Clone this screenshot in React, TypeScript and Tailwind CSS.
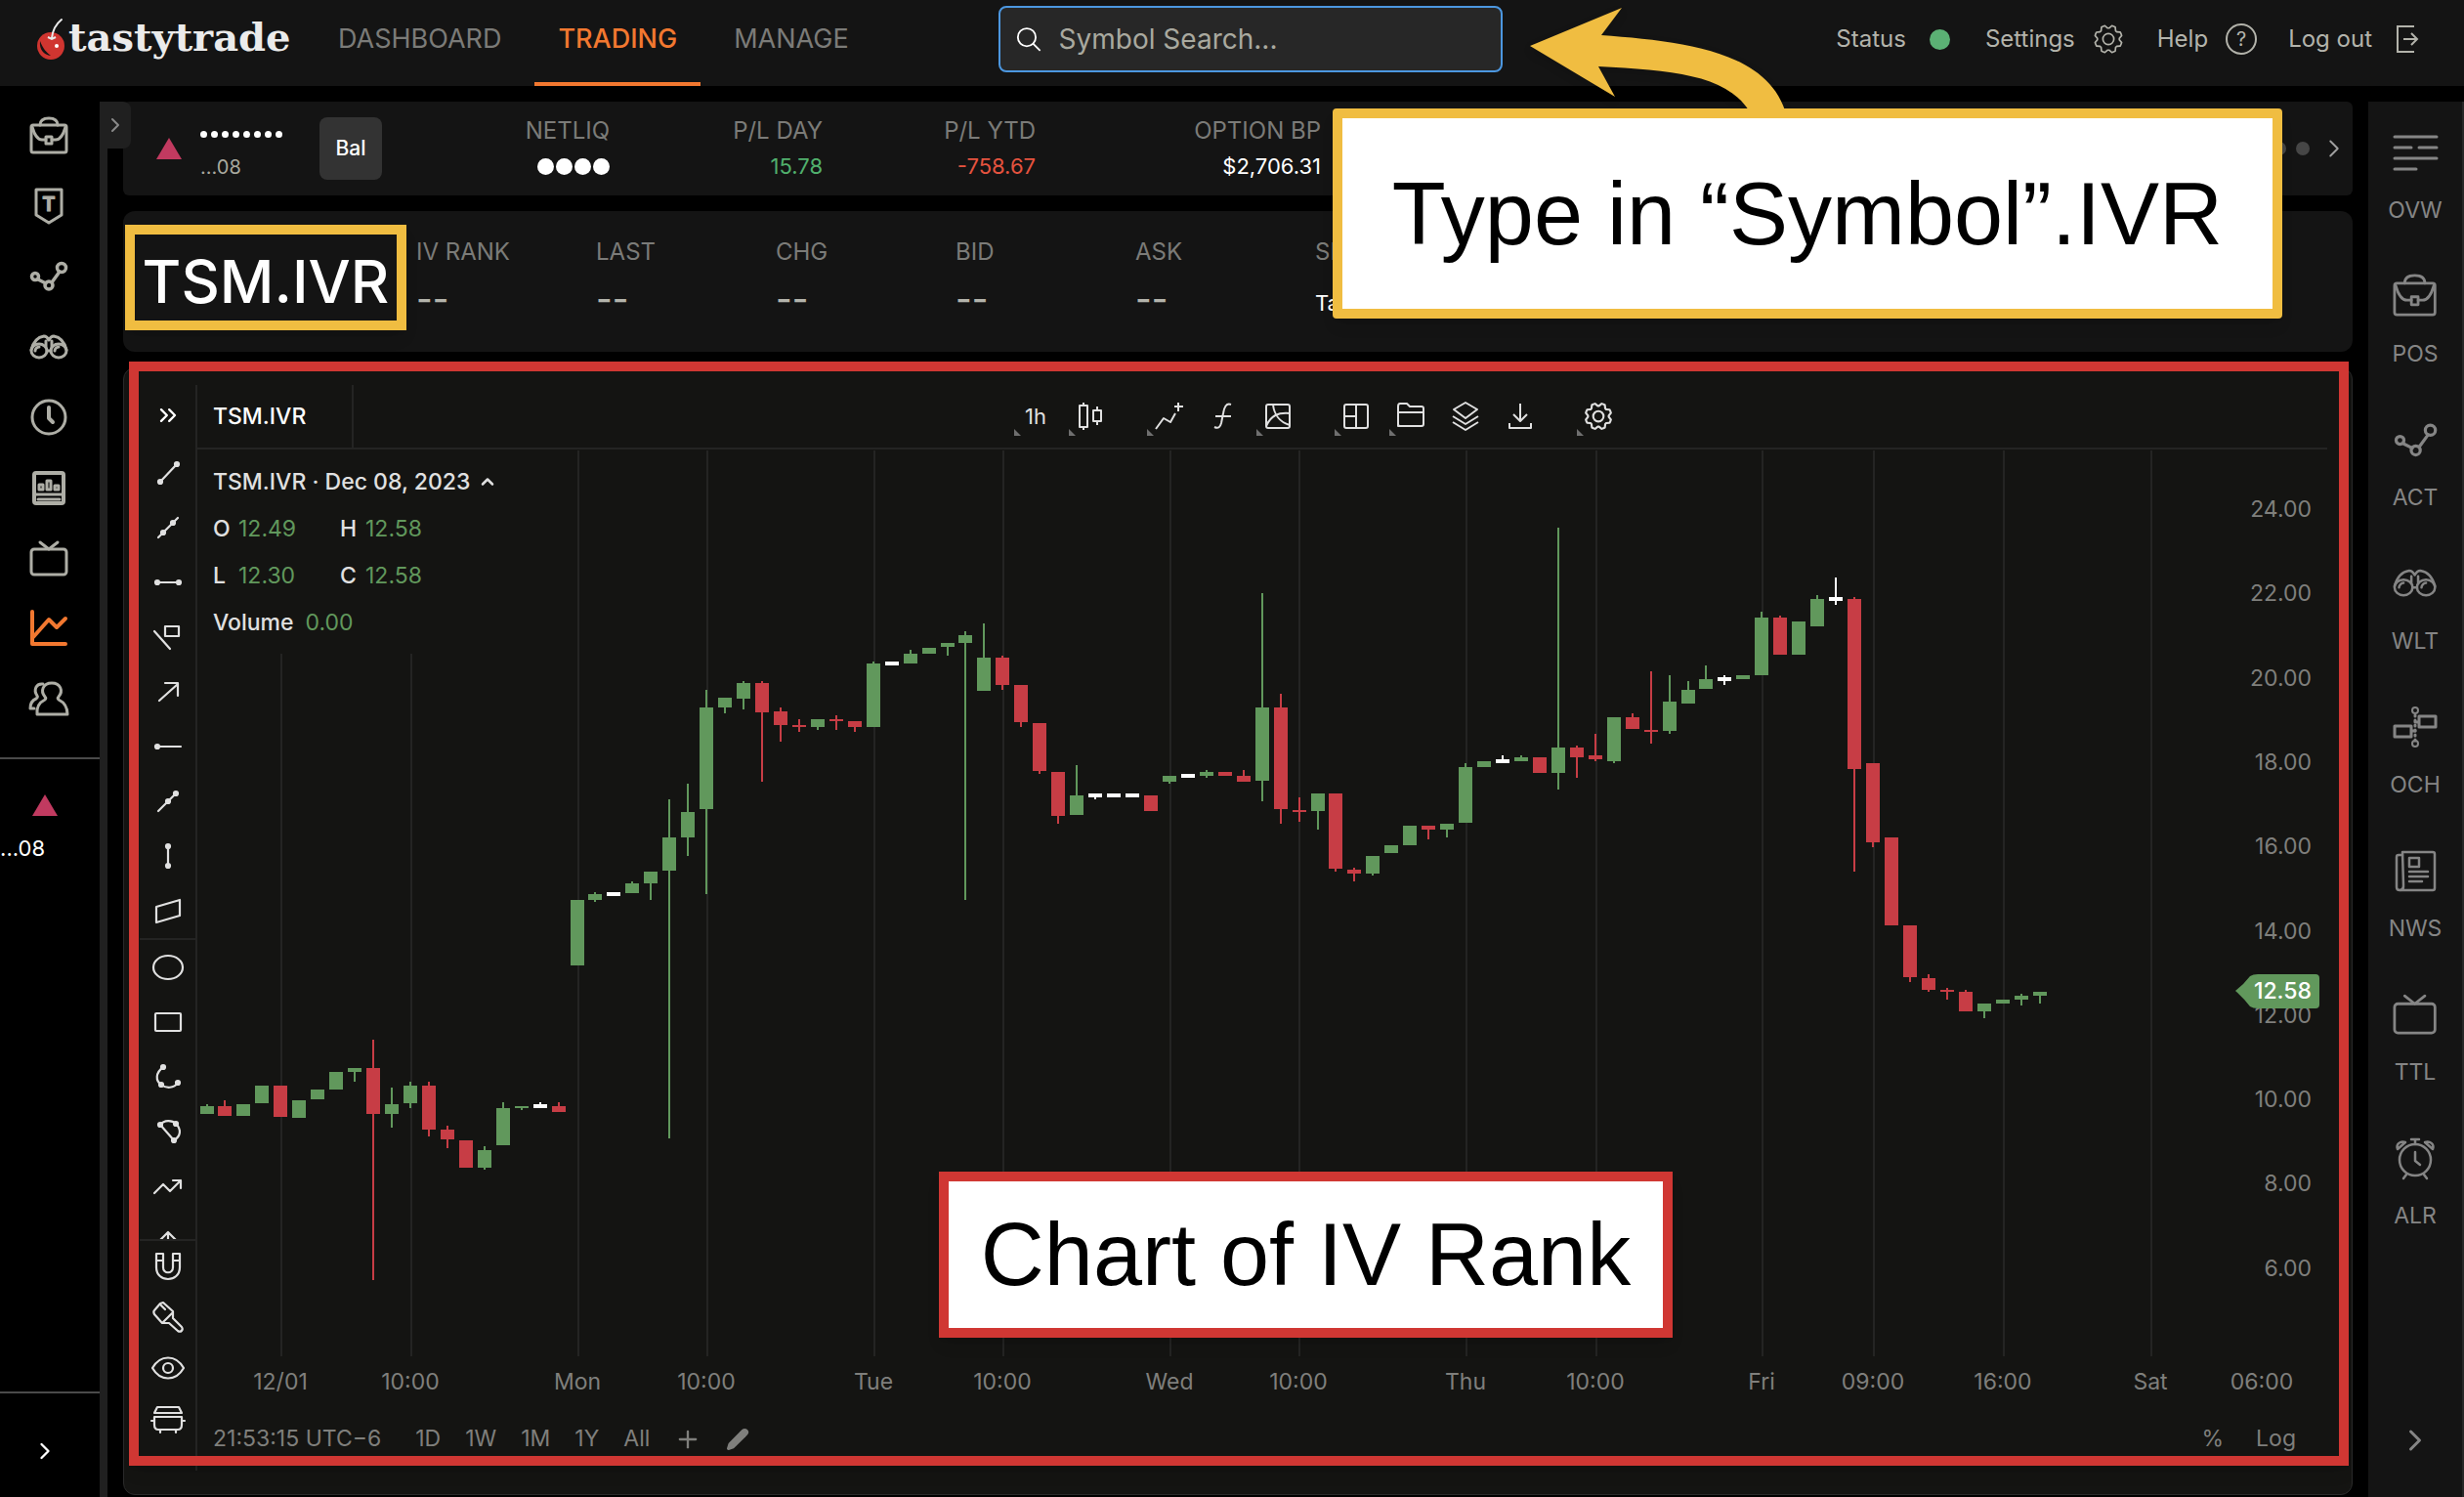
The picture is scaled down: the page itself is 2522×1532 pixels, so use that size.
import type { ReactNode } from "react";
import { ChevronRight, ChevronsRight, ChevronUp, Pencil, Plus } from "lucide-react";
import { PiGear, PiGearLight } from "react-icons/pi";

type Candle = [kind: "g" | "r" | "w", high: number, top: number, bottom: number, low: number];

// One entry per hour, y positions on the chart canvas.
const candles: Candle[] = [
  ["g", 1130, 1132, 1140, 1140], ["r", 1126, 1132, 1142, 1142], ["g", 1130, 1130, 1142, 1142], ["g", 1111, 1111, 1129, 1129],
  ["r", 1111, 1111, 1143, 1143], ["g", 1126, 1126, 1144, 1144], ["g", 1115, 1115, 1125, 1125], ["g", 1097, 1097, 1115, 1115],
  ["g", 1093, 1093, 1097, 1107], ["r", 1064, 1093, 1140, 1310], ["g", 1113, 1130, 1140, 1154], ["g", 1107, 1111, 1129, 1134],
  ["r", 1107, 1111, 1156, 1163], ["r", 1152, 1156, 1166, 1175], ["r", 1167, 1167, 1195, 1195], ["g", 1173, 1177, 1195, 1197],
  ["g", 1128, 1134, 1172, 1172], ["g", 1132, 1132, 1134, 1136], ["w", 1128, 1130, 1134, 1134], ["r", 1128, 1132, 1138, 1138],
  ["g", 921, 921, 988, 988], ["g", 913, 915, 921, 923], ["w", 913, 913, 917, 917], ["g", 902, 904, 914, 914],
  ["g", 892, 892, 904, 921], ["g", 818, 857, 891, 1165], ["g", 802, 831, 857, 876], ["g", 706, 724, 828, 915],
  ["g", 714, 714, 724, 730], ["g", 697, 699, 715, 726], ["r", 697, 699, 729, 800], ["r", 724, 728, 742, 759],
  ["r", 736, 742, 744, 749], ["g", 736, 736, 744, 747], ["r", 732, 736, 738, 747], ["r", 738, 738, 744, 749],
  ["g", 677, 679, 744, 744], ["w", 677, 677, 681, 681], ["g", 665, 669, 679, 679], ["g", 663, 663, 669, 669],
  ["g", 658, 658, 662, 671], ["g", 646, 650, 658, 921], ["g", 638, 673, 707, 707], ["r", 671, 673, 701, 706],
  ["r", 701, 701, 739, 744], ["r", 740, 740, 789, 792], ["r", 790, 790, 835, 843], ["g", 783, 814, 834, 834],
  ["w", 812, 812, 816, 818], ["w", 812, 812, 816, 816], ["w", 812, 812, 816, 816], ["r", 814, 814, 830, 830],
  ["g", 794, 794, 800, 802], ["w", 792, 792, 796, 796], ["g", 788, 790, 794, 796], ["r", 790, 790, 794, 794],
  ["r", 788, 794, 800, 800], ["g", 607, 724, 799, 820], ["r", 710, 724, 828, 843], ["r", 816, 829, 831, 841],
  ["g", 812, 812, 830, 849], ["r", 812, 812, 889, 892], ["r", 888, 890, 894, 902], ["g", 876, 876, 894, 896],
  ["g", 865, 865, 873, 873], ["g", 845, 845, 865, 865], ["r", 845, 845, 849, 859], ["g", 843, 843, 849, 857],
  ["g", 781, 785, 842, 842], ["g", 779, 779, 785, 785], ["w", 773, 777, 781, 781], ["g", 773, 775, 779, 779],
  ["r", 775, 775, 791, 791], ["g", 540, 765, 791, 808], ["r", 763, 765, 775, 796], ["r", 751, 773, 777, 779],
  ["g", 734, 734, 779, 781], ["r", 730, 734, 746, 746], ["r", 687, 747, 749, 761], ["g", 691, 718, 748, 751],
  ["g", 697, 706, 720, 720], ["g", 681, 695, 705, 705], ["w", 691, 693, 697, 701], ["g", 691, 691, 695, 695],
  ["g", 626, 632, 691, 691], ["r", 630, 632, 670, 670], ["g", 636, 636, 670, 670], ["g", 609, 613, 641, 641],
  ["w", 591, 611, 615, 619], ["r", 611, 613, 787, 892], ["r", 781, 781, 862, 867], ["r", 857, 857, 947, 947],
  ["r", 947, 947, 1000, 1005], ["r", 997, 1001, 1013, 1015], ["r", 1011, 1013, 1015, 1023], ["r", 1013, 1015, 1035, 1035],
  ["g", 1027, 1027, 1035, 1042], ["g", 1023, 1023, 1027, 1027], ["g", 1017, 1019, 1023, 1029], ["g", 1015, 1015, 1019, 1027],
];

const candleFill = { g: "#61985c", r: "#c73d45", w: "#ffffff" };

const timeTicks: [number, string][] = [
  [288, "12/01"], [421, "10:00"], [592, "Mon"], [724, "10:00"], [895, "Tue"], [1027, "10:00"], [1198, "Wed"],
  [1330, "10:00"], [1501, "Thu"], [1634, "10:00"], [1804, "Fri"], [1918, "09:00"], [2051, "16:00"], [2202, "Sat"],
];

const prices = ["24.00", "22.00", "20.00", "18.00", "16.00", "14.00", "12.00", "10.00", "8.00", "6.00"];

function Icon({ children, thin = false }: { children: ReactNode; thin?: boolean }) {
  return (
    <svg
      viewBox="0 0 48 48"
      className="size-12 shrink-0"
      fill="none"
      stroke="currentColor"
      strokeWidth={thin ? 2 : 3}
      strokeLinecap="round"
      strokeLinejoin="round"
      aria-hidden="true"
    >
      {children}
    </svg>
  );
}

const briefcase = (
  <>
    <rect x="6" y="13" width="36" height="28" rx="2" />
    <path d="M15 13C15 8 19 6 24 6s9 2 9 7M7 15c2 7 5 13 10 13h4m6 0h4c5 0 8-6 10-13" />
    <rect x="21" y="25" width="6" height="7" />
  </>
);

const nodes = (
  <>
    <circle cx="10" cy="24" r="3.5" />
    <circle cx="24" cy="33" r="4" />
    <circle cx="37" cy="15" r="4.5" />
    <path d="m13 27 8 4M27 30l8-11" />
  </>
);

const binoculars = (
  <>
    <ellipse cx="14" cy="28" rx="8" ry="7" />
    <ellipse cx="34" cy="28" rx="8" ry="7" />
    <path d="M6 27c2-8 7-13 13-14 3 0 4 2 5 4 1-2 2-4 5-4 6 1 11 6 13 14M22 28h4M21 18v6m6-6v6M10 28c0-2 2-4 4-4M30 28c0-2 2-4 4-4" />
  </>
);

const tv = (
  <>
    <rect x="6" y="15" width="36" height="26" rx="3" />
    <path d="m15 8 9 7 9-7" />
  </>
);

const sideNav: { label: string; active?: boolean; icon: ReactNode }[] = [
  { label: "Positions", icon: briefcase },
  {
    label: "Trade",
    icon: (
      <>
        <path d="M11 7h26v26l-13 8-13-8z" />
        <text x="24" y="29" textAnchor="middle" fontSize="20" fontWeight="700" fill="currentColor" strokeWidth="1">
          T
        </text>
      </>
    ),
  },
  { label: "Activity", icon: <g strokeWidth="3.5">{nodes}</g> },
  { label: "Watchlists", icon: binoculars },
  {
    label: "History",
    icon: (
      <>
        <circle cx="24" cy="24" r="17" />
        <path d="M24 14v11l4 4" strokeWidth="4" />
      </>
    ),
  },
  {
    label: "Reports",
    icon: (
      <>
        <rect x="9" y="9" width="30" height="31" rx="2" strokeWidth="4" />
        <path d="M14 26v-5h4v5zM22 26v-9h4v9zM30 26v-4h4v4zM10 31h28" />
        <path d="M13 36h22" />
      </>
    ),
  },
  { label: "Live TV", icon: tv },
  { label: "Charts", active: true, icon: <path d="M7 7v33h34M8 33l16-18 8 8 9-9" strokeWidth="4" /> },
  {
    label: "Community",
    icon: (
      <>
        <path d="M12 40c-1-8 2-12 8-15 1-1 1-2 0-3-5-6-2-14 7-14s12 8 7 14c-1 1-1 2 0 3 6 3 9 7 9 15z" />
        <path d="M18 9c-7-1-10 6-6 12 1 1 0 2-1 3-5 2-6 6-6 10h4" />
      </>
    ),
  },
];

const widgets: { code: string; icon: ReactNode }[] = [
  { code: "OVW", icon: <path d="M3 8h43M3 19h17m8 0h18M3 30h43M3 41h22" strokeWidth="3" /> },
  { code: "POS", icon: <g strokeWidth="2.4" transform="matrix(1.15 0 0 1.15 -4 -4)">{briefcase}</g> },
  { code: "ACT", icon: <g strokeWidth="2.8" transform="matrix(1.15 0 0 1.15 -3 -3)">{nodes}</g> },
  { code: "WLT", icon: <g strokeWidth="2.2" transform="matrix(1.15 0 0 1.15 -4 -4)">{binoculars}</g> },
  {
    code: "OCH",
    icon: (
      <g strokeWidth="3">
        <path d="M3 23h17v11H3zM28 13h17v11H28zM20 28h4m0-9h4" />
        <circle cx="24" cy="7" r="3" strokeWidth="2" />
        <circle cx="24" cy="41" r="3" strokeWidth="2" />
        <path d="M24 12v26" strokeDasharray="1 4" />
      </g>
    ),
  },
  {
    code: "NWS",
    icon: (
      <g strokeWidth="2.5">
        <path d="M11 5h31a2 2 0 0 1 2 2v35a2 2 0 0 1-2 2H9c3 0 3-3 3-5z" />
        <path d="M11 8H7a2 2 0 0 0-2 2v31c0 4 6 4 7 0M18 11h10v9H18zM18 25h19M18 30h19M18 35h13" />
      </g>
    ),
  },
  { code: "TTL", icon: <g strokeWidth="2.4" transform="matrix(1.15 0 0 1.15 -4 -4)">{tv}</g> },
  {
    code: "ALR",
    icon: (
      <g strokeWidth="2.5">
        <circle cx="24" cy="26" r="16" />
        <path d="M24 18v9l5 4M20 5h8m-4 0v5M15 41l-3 4M33 41l3 4M6 15c-2-5 3-9 8-7zM42 15c2-5-3-9-8-7z" />
      </g>
    ),
  },
];

function Dot({ x, y }: { x: number; y: number }) {
  return <circle cx={x} cy={y} r="2" fill="currentColor" />;
}

const drawTools: { label: string; icon: ReactNode }[] = [
  { label: "Segment", icon: <><path d="M-8 9 9-9" /><Dot x={-8} y={9} /><Dot x={9} y={-9} /></> },
  { label: "Line", icon: <><path d="m-10 10 20-20" /><Dot x={-5} y={5} /><Dot x={5} y={-5} /></> },
  { label: "Horizontal segment", icon: <><path d="M-11 0h22" /><Dot x={-11} y={0} /><Dot x={11} y={0} /></> },
  { label: "Callout", icon: <path d="M-14-6 2 12M-3-11h14V-1H-3z" /> },
  { label: "Arrow", icon: <path d="M-9 9 10-8M-3-9h13V4" /> },
  { label: "Horizontal ray", icon: <><path d="M-11 0h24" /><Dot x={-11} y={0} /></> },
  { label: "Ray", icon: <><path d="M-10 10 8-8" /><Dot x={0} y={0} /><Dot x={8} y={-8} /></> },
  { label: "Vertical segment", icon: <><path d="M0-10v20" /><Dot x={0} y={-10} /><Dot x={0} y={10} /></> },
  { label: "Channel", icon: <path d="m-12-4 24-7V5l-24 7z" /> },
];

const shapeTools: { label: string; icon: ReactNode }[] = [
  { label: "Ellipse", icon: <ellipse rx="15" ry="12" /> },
  { label: "Rectangle", icon: <rect x="-13" y="-9" width="26" height="18" rx="1" /> },
  { label: "Arc", icon: <><path d="M-5-10c-8 6-8 14-2 18 5 4 13 4 17-2" /><Dot x={-5} y={-10} /><Dot x={-7} y={8} /><Dot x={10} y={6} /></> },
  { label: "Curve", icon: <><path d="M6 9-8-7c4-5 12-5 16-1 6 6 5 13-2 17z" /><Dot x={-8} y={-7} /><Dot x={8} y={-8} /><Dot x={6} y={9} /></> },
  { label: "Trend", icon: <path d="m-14 7 9-9 7 7L13-6M5-6h8v8" /> },
];

const modeTools: { label: string; icon: ReactNode }[] = [
  { label: "Magnet", icon: <path d="M-12-13h7V1C-5 8 5 8 5 1v-14h7V1c0 16-24 16-24 0zM-12-6h7m10 0h7" /> },
  { label: "Brush", icon: <path d="m-5-15 10 9v7l9 9c2 3-1 6-4 4L1 6h-7l-8-9c-1-2-1-3 0-4l6-7zM5-5-5 5M-7-12l4 4" /> },
  { label: "Visibility", icon: <><path d="M-16 0C-8-14 8-14 16 0 8 14-8 14-16 0z" /><circle r="5" /></> },
  { label: "Drawer", icon: <path d="m-14-6 3-6h22l3 6zM-14-2h28v8c0 4-2 5-4 5h-20c-2 0-4-1-4-5zM-17 2h3m28 0h3M-8 11v3M8 11v3" /> },
];

function ToolButton({ label, children, tall = false }: { label: string; children: ReactNode; tall?: boolean }) {
  return (
    <button aria-label={label} className={tall ? "flex h-14 w-full items-center justify-center" : "flex h-[52px] w-full items-center justify-center"}>
      <svg viewBox="-20 -20 40 40" className="size-10" fill="none" stroke="currentColor" strokeWidth="2.2" strokeLinecap="round" strokeLinejoin="round">
        {children}
      </svg>
    </button>
  );
}

const toolbarGroups: { label: string; menu?: boolean; icon: ReactNode }[][] = [
  [
    { label: "Interval", menu: true, icon: <span className="text-[22px]">1h</span> },
    { label: "Chart type", menu: true, icon: <path d="M-11-11h8v22h-8zM-7-14v3m0 22v3M3-6h8V5H3zM7-10v4m0 11v4" /> },
  ],
  [
    { label: "Indicators", menu: true, icon: <path d="m-13 13 8-11 7 4L7-3M10-14v9m-4-5h9" /> },
    { label: "Functions", icon: <path d="M8-12C3-14 1-9 0-3l-2 10c-1 4-3 6-7 4M-8 0H8" /> },
    { label: "Patterns", menu: true, icon: <><rect x="-12" y="-12" width="24" height="24" rx="2" /><path d="M-5-12C-4-2 2 6 12 9M-12 10C-7-1 0-4 12-3" /></> },
  ],
  [
    { label: "Layout", menu: true, icon: <><rect x="-12" y="-12" width="24" height="24" rx="2" /><path d="M0-12v24M-12 0H0" /></> },
    { label: "Open", menu: true, icon: <path d="M-13 11v-20c0-2 1-3 2-3h7l3 3H11c1 0 2 1 2 2v16c0 1-1 2-2 2h-22c-1 0-2-1-2-2zM-13-3h26" transform="translate(0 -1)" /> },
    { label: "Layers", icon: <path d="M0-14 12-7 0 2l-12-9zM-13 0 0 8 13 0M-13 6 0 14 13 6" /> },
    { label: "Download", icon: <path d="M0-13V5m-7-7 7 7 7-7M-11 7v5h22V7" /> },
  ],
  [{ label: "Chart settings", menu: true, icon: <PiGear className="size-[34px]" /> }],
];

const quoteFields = ["IV RANK", "LAST", "CHG", "BID", "ASK"];

function Metric({ label, value, wide = false }: { label: string; value: ReactNode; wide?: boolean }) {
  return (
    <div className={wide ? "w-[292px] text-right" : "w-[218px] text-right"}>
      <div className="text-2xl leading-9 text-[#7b7b78]">{label}</div>
      <div className="flex h-9 items-center justify-end text-[22px]">{value}</div>
    </div>
  );
}

function Header() {
  return (
    <header className="flex h-[88px] bg-[#141414]">
      <a href="#" className="flex w-[322px] items-center pb-2 pl-[37px] text-[#ebebeb]">
        <svg viewBox="0 0 30 44" className="h-11 w-[30px]" aria-hidden="true">
          <circle cx="15" cy="29" r="14" fill="#d03530" />
          <path d="M4 24c-1 9 4 14 11 15-4-3-8-7-11-15" fill="#141414" />
          <path d="M16 21C17 12 21 6 26 2" fill="none" stroke="#ebebeb" strokeWidth="2" strokeLinecap="round" />
          <path d="m12 20 4 2 4-2" fill="none" stroke="#ebebeb" strokeWidth="2" />
          <circle cx="21" cy="29" r="2" fill="#ffffff" />
        </svg>
        <span className="ml-[3px] pb-1 font-['DejaVu_Serif'] text-[40px] leading-none font-bold">tastytrade</span>
      </a>
      <nav className="flex w-[700px] gap-[10px] text-[27px] text-[#7b7b78]">
        <a href="#" className="flex items-center px-6 pb-2">DASHBOARD</a>
        <a href="#" className="flex items-center border-b-4 border-[#f27830] px-6 pb-1 font-medium text-[#f27830]">TRADING</a>
        <a href="#" className="flex items-center px-6 pb-2">MANAGE</a>
      </nav>
      <label className="mt-[6px] flex h-[68px] w-[516px] items-center gap-[18px] rounded-lg border-2 border-[#4c97e0] bg-[#272727] pl-4">
        <svg viewBox="0 0 28 28" className="size-7" fill="none" stroke="#ffffff" strokeWidth="2" aria-hidden="true">
          <circle cx="12" cy="12" r="10" />
          <path d="m19 19 8 8" />
        </svg>
        <input
          type="text"
          aria-label="Symbol search"
          placeholder="Symbol Search..."
          className="w-full bg-transparent text-[28px] outline-none placeholder:text-[#a9a99f]"
        />
      </label>
      <div className="ml-auto flex items-center gap-8 pr-[46px] pb-2 text-2xl text-[#b3b3ab]">
        <a href="#" className="mr-1 flex items-center gap-6">
          Status <span className="size-[21px] rounded-full bg-[#5bb174]" />
        </a>
        <a href="#" className="flex items-center gap-4">
          Settings <PiGearLight className="size-9" />
        </a>
        <a href="#" className="flex items-center gap-[18px]">
          Help
          <span className="flex size-8 items-center justify-center rounded-full border-2 border-[#b3b3ab] text-xl">?</span>
        </a>
        <a href="#" className="flex items-center gap-6">
          Log out
          <svg viewBox="0 0 24 28" className="h-7 w-6" fill="none" stroke="currentColor" strokeWidth="2" aria-hidden="true">
            <path d="M19 1H2v26h17M8 14h14m-6-6 6 6-6 6" />
          </svg>
        </a>
      </div>
    </header>
  );
}

function Sidebar() {
  return (
    <nav className="flex w-[102px] flex-col pt-[15px] text-[#aeaea6]">
      <div className="flex flex-col pb-6">
        {sideNav.map((item) => (
          <button
            key={item.label}
            aria-label={item.label}
            className={item.active ? "flex h-[72px] items-center pl-[26px] text-[#f27830]" : "flex h-[72px] items-center pl-[26px]"}
          >
            <Icon>{item.icon}</Icon>
          </button>
        ))}
      </div>
      <div className="flex-1 border-t-2 border-[#4a4a4a] pt-9 text-white">
        <svg viewBox="0 0 26 22" className="ml-[33px] h-[22px] w-[26px]" aria-hidden="true">
          <path d="M13 0 26 22H0z" fill="#c13a60" />
        </svg>
        <div className="mt-5 w-[46px] text-right text-[22px] leading-[26px]">...08</div>
      </div>
      <button aria-label="Expand menu" className="flex h-[108px] items-center border-t-2 border-[#4a4a4a] pt-3 pl-8 text-white">
        <ChevronRight className="size-7" />
      </button>
    </nav>
  );
}

function AccountBar() {
  return (
    <section className="flex h-24 items-center rounded-md bg-[#141414] pl-[34px]">
      <svg viewBox="0 0 26 22" className="h-[22px] w-[26px]" aria-hidden="true">
        <path d="M13 0 26 22H0z" fill="#c13a60" />
      </svg>
      <div className="ml-[19px] w-[122px] pt-3">
        <div className="flex gap-1">
          {Array.from({ length: 8 }, (_, i) => (
            <span key={i} className="size-[7px] rounded-full bg-white" />
          ))}
        </div>
        <div className="mt-[18px] text-xl leading-6 text-[#a9a99f]">...08</div>
      </div>
      <button className="h-16 w-16 rounded-lg bg-[#333333] text-[21px] font-medium text-white">Bal</button>
      <div className="ml-[15px] flex text-white">
        <Metric
          label="NETLIQ"
          value={
            <span className="flex gap-[2px]">
              {Array.from({ length: 4 }, (_, i) => (
                <span key={i} className="size-[17px] rounded-full bg-white" />
              ))}
            </span>
          }
        />
        <Metric label="P/L DAY" value={<span className="text-[#51b06d]">15.78</span>} />
        <Metric label="P/L YTD" value={<span className="text-[#e5533f]">-758.67</span>} />
        <Metric label="OPTION BP" value="$2,706.31" wide />
      </div>
      <div className="ml-auto flex items-center gap-[10px] pr-1">
        <span className="size-[14px] rounded-full bg-[#464646]" />
        <span className="size-[14px] rounded-full bg-[#464646]" />
        <button aria-label="Next account metrics" className="text-[#a0a0a0]">
          <ChevronRight className="size-[30px]" strokeWidth={1.5} />
        </button>
      </div>
    </section>
  );
}

function QuoteBar() {
  return (
    <section className="mt-4 flex h-36 rounded-xl bg-[#141414] pl-[2px]">
      <h1 className="mt-[14px] flex h-[108px] w-[288px] items-center justify-center border-[10px] border-[#f0bd41] pt-2 text-[61px] leading-none font-medium text-white shadow-lg">
        TSM.IVR
      </h1>
      <div className="ml-[10px] flex pt-7">
        {quoteFields.map((label) => (
          <div key={label} className="w-46">
            <div className="text-2xl leading-7 text-[#7b7b78]">{label}</div>
            <div className="mt-[18px] text-[36px] leading-8 font-medium text-[#b3b3ab]">--</div>
          </div>
        ))}
        <div>
          <div className="text-2xl leading-7 text-[#7b7b78]">SIZE</div>
          <div className="mt-[22px] text-[22px] leading-8 text-white">Ta</div>
        </div>
      </div>
    </section>
  );
}

function CandleChart() {
  return (
    <svg viewBox="202 460 2180 980" className="block w-full" role="img" aria-label="TSM.IVR hourly candles">
      {timeTicks.map(([x]) => (
        <rect key={x} x={x - 1} y="461" width="2" height="927" fill="#242423" />
      ))}
      {candles.map(([kind, high, top, bottom, low], i) => {
        const x = Math.floor(205 + i * 18.95);
        return (
          <g key={i} fill={candleFill[kind]}>
            <rect x={x + 6} y={high} width="2" height={low - high} />
            <rect x={x} y={top} width="14" height={bottom - top} />
          </g>
        );
      })}
      <g fill="#7f7f7c" fontSize="23">
        {timeTicks.map(([x, label]) => (
          <text key={x} x={x - 1} y="1422" textAnchor="middle">
            {label}
          </text>
        ))}
        <text x="2315" y="1422" textAnchor="middle">06:00</text>
        {prices.map((price, i) => (
          <text key={price} x="2366" y={Math.round(529 + i * 86.3)} textAnchor="end">
            {price}
          </text>
        ))}
      </g>
      <path d="M2288 1014q9-7 15-15 3-2 8-2h59a4 4 0 0 1 4 4v27a4 4 0 0 1-4 4h-59q-5 0-8-2-6-8-15-16z" fill="#61985c" />
      <text x="2366" y="1022" textAnchor="end" fontSize="23" fontWeight="500" fill="#ffffff">12.58</text>
    </svg>
  );
}

function Legend() {
  return (
    <div className="absolute top-0 left-0 w-[320px] bg-[#141412] pt-[9px] pb-2 pl-4 text-[23px] leading-[48px] font-medium text-[#e0e0e0]">
      <button className="flex items-center gap-2 whitespace-nowrap">
        TSM.IVR · Dec 08, 2023 <ChevronUp className="size-5" strokeWidth={3} />
      </button>
      <dl className="grid w-[230px] grid-cols-[130px_100px]">
        <div className="flex"><dt className="w-[26px]">O</dt><dd className="font-normal text-[#61985c]">12.49</dd></div>
        <div className="flex"><dt className="w-[26px]">H</dt><dd className="font-normal text-[#61985c]">12.58</dd></div>
        <div className="flex"><dt className="w-[26px]">L</dt><dd className="font-normal text-[#61985c]">12.30</dd></div>
        <div className="flex"><dt className="w-[26px]">C</dt><dd className="font-normal text-[#61985c]">12.58</dd></div>
        <div className="flex gap-3"><dt>Volume</dt><dd className="font-normal text-[#61985c]">0.00</dd></div>
      </dl>
    </div>
  );
}

function ChartPanel() {
  return (
    <section className="relative mt-4 mb-[2px] flex flex-1 rounded-xl border border-[#2a2a2a] bg-[#141412] pt-[17px] text-[#e0e0e0]">
      <div className="flex w-[73px] flex-col pl-4">
        <button aria-label="Collapse tools" className="flex h-[62px] items-center justify-center text-white">
          <ChevronsRight className="size-7" />
        </button>
        {drawTools.map((t) => (
          <ToolButton key={t.label} label={t.label} tall>{t.icon}</ToolButton>
        ))}
        <div className="border-t-2 border-[#242423]">
          {shapeTools.map((t) => (
            <ToolButton key={t.label} label={t.label} tall>{t.icon}</ToolButton>
          ))}
        </div>
        <div className="h-[28px] overflow-hidden border-b-2 border-[#242423]">
          <ToolButton label="Up arrow" tall><path d="M0 14V-9m-9 9 9-9 9 9" /></ToolButton>
        </div>
        {modeTools.map((t) => (
          <ToolButton key={t.label} label={t.label}>{t.icon}</ToolButton>
        ))}
      </div>

      <div className="mr-[25px] mb-6 flex flex-1 flex-col border-l-2 border-[#242423]">
        <div className="flex h-[66px] border-b-2 border-[#242423]">
          <div className="flex w-[160px] items-center border-r-2 border-[#242423] pl-4 text-[23px] font-medium text-white">TSM.IVR</div>
          <div className="flex flex-1 gap-6 pl-[670px]">
            {toolbarGroups.map((group, i) => (
              <div key={i} className="flex">
                {group.map((t) => (
                  <button key={t.label} aria-label={t.label} className="relative flex w-14 items-center justify-center">
                    {t.label === "Interval" || t.label === "Chart settings" ? (
                      t.icon
                    ) : (
                      <svg viewBox="-18 -18 36 36" className="size-9" fill="none" stroke="currentColor" strokeWidth="2" strokeLinejoin="round">
                        {t.icon}
                      </svg>
                    )}
                    {t.menu && (
                      <svg viewBox="0 0 7 7" className="absolute bottom-3 left-[6px] size-[7px]" fill="#6f6f6f">
                        <path d="M0 0v7h7z" />
                      </svg>
                    )}
                  </button>
                ))}
              </div>
            ))}
          </div>
        </div>
        <div className="relative">
          <CandleChart />
          <Legend />
        </div>
        <div className="flex flex-1 items-center gap-[25px] pr-8 pl-4 text-[23px] text-[#7f7f7c]">
          <span className="mr-[10px]">21:53:15 UTC−6</span>
          <button>1D</button>
          <button>1W</button>
          <button>1M</button>
          <button>1Y</button>
          <button>All</button>
          <button aria-label="Add range"><Plus className="size-7" /></button>
          <button aria-label="Edit ranges"><Pencil className="size-6" fill="currentColor" /></button>
          <button className="ml-auto">%</button>
          <button className="ml-2">Log</button>
        </div>
      </div>

      <div className="pointer-events-none absolute -top-[7px] right-[3px] bottom-[29px] left-[5px] border-[10px] border-[#d03733] shadow-lg" />
      <p className="absolute bottom-[160px] left-[834px] flex h-[170px] w-[751px] items-center justify-center border-[10px] border-[#d03733] bg-white font-['Liberation_Sans'] text-[90px] leading-none text-black shadow-lg">
        Chart of IV Rank
      </p>
    </section>
  );
}

function WidgetRail() {
  return (
    <aside className="mt-4 flex w-[98px] flex-col items-center border-r-2 border-[#262626] bg-[#141414] pt-7 text-[#858585]">
      <div className="flex flex-col gap-[52px]">
        {widgets.map((w) => (
          <button key={w.code} className="flex flex-col items-center gap-[23px] text-[23px] leading-6">
            <Icon thin>{w.icon}</Icon>
            {w.code}
          </button>
        ))}
      </div>
      <button aria-label="Collapse widgets" className="mt-auto mb-10">
        <ChevronRight className="size-9" />
      </button>
    </aside>
  );
}

function SearchCallout() {
  return (
    <div className="absolute top-0 right-[186px] w-[972px] pt-[111px]">
      <svg viewBox="0 0 280 120" className="absolute top-0 left-[192px] h-[120px] w-[280px] drop-shadow-lg" aria-hidden="true">
        <path d="M10 47 104 8 83 36C160 42 250 50 271 113h-37C210 76 154 72 80 68l17 31z" fill="#f0bd41" />
      </svg>
      <p className="relative flex h-[215px] items-center justify-center rounded border-[10px] border-[#f0bd41] bg-white font-['Liberation_Sans'] text-[90px] leading-none text-black shadow-lg">
        Type in “Symbol”.IVR
      </p>
    </div>
  );
}

export default function App() {
  return (
    <div className="relative flex min-h-screen flex-col bg-black font-['Inter',sans-serif]">
      <Header />
      <div className="flex flex-1">
        <Sidebar />
        <div className="relative mt-4 w-2 bg-[#202020]">
          <button aria-label="Expand accounts" className="absolute top-0 left-0 z-10 flex h-12 w-8 items-center justify-center rounded-r-lg bg-[#202020] text-[#8a8a8a]">
            <ChevronRight className="size-6" />
          </button>
        </div>
        <main className="mx-4 mt-4 flex flex-1 flex-col">
          <AccountBar />
          <QuoteBar />
          <ChartPanel />
        </main>
        <WidgetRail />
      </div>
      <SearchCallout />
    </div>
  );
}
